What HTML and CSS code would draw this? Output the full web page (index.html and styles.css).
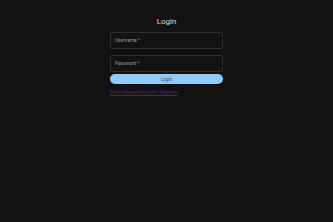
FILE: index.html
```html
<!DOCTYPE html>
<html>
<head>
<meta charset="utf-8">
<link rel="stylesheet" href="styles.css">
</head>
<body>
<main class="page">
  <form class="login">
    <h1 class="title">Login</h1>
    <div class="field"><span class="label">Username *</span></div>
    <div class="field"><span class="label">Password *</span></div>
    <button type="button" class="btn">Login</button>
    <a class="link" href="#">Don't have an account? Register</a>
  </form>
</main>
</body>
</html>
```
FILE: styles.css
```css
html, body {
  margin: 0;
  padding: 0;
  background: #121212;
  height: 100%;
}
body {
  font-family: Roboto, "Liberation Sans", sans-serif;
}
.page {
  display: flex;
  justify-content: center;
  padding-top: 16px;
}
.login {
  width: 113px;
  display: flex;
  flex-direction: column;
}
.title {
  margin: 1px 0 5px 0;
  font-size: 8px;
  font-weight: 400;
  line-height: 10px;
  color: #dcdcdc;
  text-align: center;
}
.field {
  box-sizing: border-box;
  height: 17px;
  border: 1px solid #2f2f2f;
  border-radius: 2px;
  display: flex;
  align-items: center;
  padding-left: 4px;
  margin-bottom: 6px;
}
.label {
  font-size: 4.8px;
  color: #9a9a9a;
}
.btn {
  margin-top: -4px;
  height: 10px;
  border: none;
  border-radius: 5px;
  background: #90caf9;
  color: #3a4a58;
  font-family: Roboto, "Liberation Sans", sans-serif;
  font-size: 4.5px;
  padding: 0;
  box-shadow: 0 1px 1px rgba(0,0,0,0.4);
}
.link {
  margin-top: 6px;
  font-size: 4.8px;
  color: #4a1f86;
  text-decoration: underline;
}
```
